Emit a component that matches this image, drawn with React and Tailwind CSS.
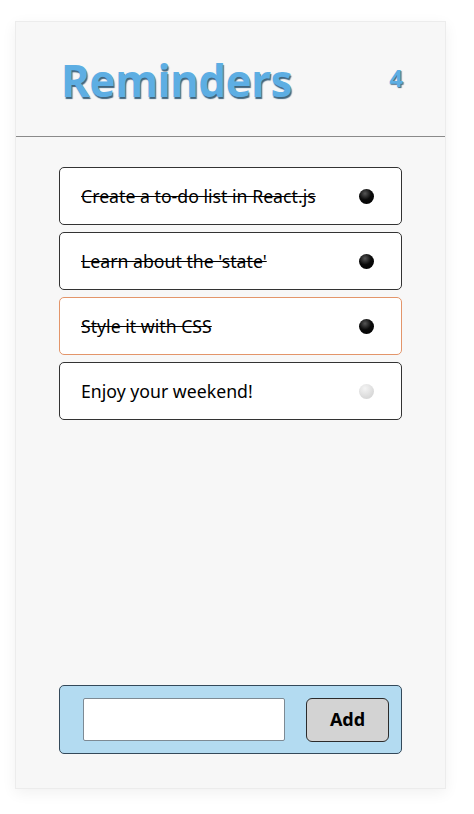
import { useState } from 'react';

const initial = [
  { id: 1, text: 'Create a to-do list in React.js', done: true },
  { id: 2, text: "Learn about the 'state'", done: true },
  { id: 3, text: 'Style it with CSS', done: true, active: true },
  { id: 4, text: 'Enjoy your weekend!', done: false },
];

function Dot({ done }) {
  return (
    <span
      className={
        done
          ? 'block w-[15px] h-[15px] rounded-full bg-[radial-gradient(circle_at_40%_30%,#555_0%,#0a0a0a_45%,#000_100%)]'
          : 'block w-[15px] h-[15px] rounded-full bg-[radial-gradient(circle_at_40%_30%,#f4f4f4_0%,#dcdcdc_60%,#cfcfcf_100%)]'
      }
    />
  );
}

export default function App() {
  const [items, setItems] = useState(initial);
  const [text, setText] = useState('');

  const toggle = (id) =>
    setItems(items.map((i) => (i.id === id ? { ...i, done: !i.done } : i)));

  const add = (e) => {
    e.preventDefault();
    if (!text.trim()) return;
    setItems([...items, { id: Date.now(), text, done: false }]);
    setText('');
  };

  return (
    <div className="min-h-[814px] bg-white pt-[21px] pl-[15px] font-['Noto_Sans',sans-serif]">
      <div className="w-[431px] h-[768px] bg-[#f7f7f7] border border-[#ececec] shadow-[0_4px_14px_rgba(0,0,0,0.06)] flex flex-col">
        {/* header */}
        <div className="h-[115px] flex items-center justify-between pl-[45px] pr-[42px] border-b border-[#8a8a8a]">
          <h1 className="text-[44px] font-bold text-[#5daee3] leading-none tracking-[-0.5px] [text-shadow:1px_2px_1px_#41657d] mt-[1px]">
            Reminders
          </h1>
          <span className="text-[24px] font-bold text-[#5daee3] [text-shadow:1px_1px_1px_#41657d] mt-[-2px]">
            {items.length}
          </span>
        </div>

        {/* list */}
        <ul className="flex-1 flex flex-col gap-[7px] pt-[30px] px-[43px]">
          {items.map((item) => (
            <li
              key={item.id}
              onClick={() => toggle(item.id)}
              className={
                'h-[58px] bg-white rounded-[5px] border flex items-center justify-between pl-[21px] pr-[27px] cursor-pointer ' +
                (item.active ? 'border-[#e3956a]' : 'border-[#333]')
              }
            >
              <span className={'text-[17.7px] text-black ' + (item.done ? 'line-through' : '')}>
                {item.text}
              </span>
              <Dot done={item.done} />
            </li>
          ))}
        </ul>

        {/* form */}
        <form
          onSubmit={add}
          className="mx-[43px] mb-[34px] h-[69px] bg-[#b3dbf1] border border-[#34495a] rounded-[5px] flex items-center justify-between pl-[23px] pr-[12px]"
        >
          <input
            value={text}
            onChange={(e) => setText(e.target.value)}
            className="w-[202px] h-[43px] bg-white border border-[#7d8a94] rounded-[2px] px-2 text-[16px] outline-none"
          />
          <button
            type="submit"
            className="w-[83px] h-[44px] bg-[#d3d3d3] border border-[#2b2b2b] rounded-[6px] text-[18px] font-bold text-black"
          >
            Add
          </button>
        </form>
      </div>
    </div>
  );
}
